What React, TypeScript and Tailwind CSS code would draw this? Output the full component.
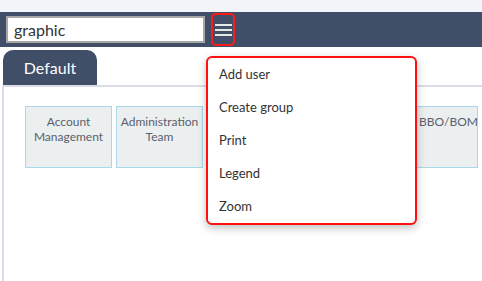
const menuItems = ['Add user', 'Create group', 'Print', 'Legend', 'Zoom'];

const cards = [
  { label: 'Account Management', width: 'w-[87px]' },
  { label: 'Administration Team', width: 'w-[87px]' },
  { label: 'Business Development', width: 'w-[205px]' },
  { label: 'BBO/BOM', width: 'w-[62px]' },
];

export default function App() {
  return (
    <div className="relative h-[281px] w-[482px] overflow-hidden bg-white font-['Lato','Open_Sans',sans-serif]">
      <div className="h-3 bg-[#f3f4f9]" />
      <div className="flex h-[35px] items-center bg-[#404e68]">
        <input
          readOnly
          value="graphic"
          className="ml-[6px] h-[27px] w-[199px] border-2 border-[#a7a7a7] bg-white px-[6px] text-[16px] text-[#333] outline-none"
        />
        <button className="ml-[6px] flex h-[33px] w-[24px] flex-col items-center justify-center gap-[3px] rounded-[5px] border-2 border-[#ff1a1a]">
          <span className="h-[2px] w-[17px] bg-[#e6e6e6]" />
          <span className="h-[2px] w-[17px] bg-[#e6e6e6]" />
          <span className="h-[2px] w-[17px] bg-[#e6e6e6]" />
        </button>
      </div>

      <div className="mt-[3px] flex">
        <div className="ml-[3px] flex h-[35px] w-[94px] items-center justify-center rounded-t-[10px] bg-[#404e68] pt-[1px] text-[16px] text-white">
          Default
        </div>
      </div>

      <div className="ml-[2px] h-[200px] border-l-2 border-t-2 border-[#dcdde9]">
        <div className="flex gap-[4px] pl-[21px] pt-[19px]">
          {cards.map((c) => (
            <div
              key={c.label}
              className={`${c.width} border border-[#a9d9e8] bg-[#ebeff0] px-[2px] pb-[23px] pt-[7px] text-center text-[12px] leading-[15px] text-[#5a5f6e]`}
            >
              {c.label}
            </div>
          ))}
        </div>
      </div>

      <div className="absolute left-[206px] top-[56px] w-[211px] rounded-[6px] border-2 border-[#ff1010] bg-white shadow-[0_3px_8px_rgba(0,0,0,0.25)]">
        {menuItems.map((item) => (
          <div key={item} className="flex h-[33px] items-center pl-[11px] text-[13px] text-[#333]">
            {item}
          </div>
        ))}
      </div>
    </div>
  );
}
